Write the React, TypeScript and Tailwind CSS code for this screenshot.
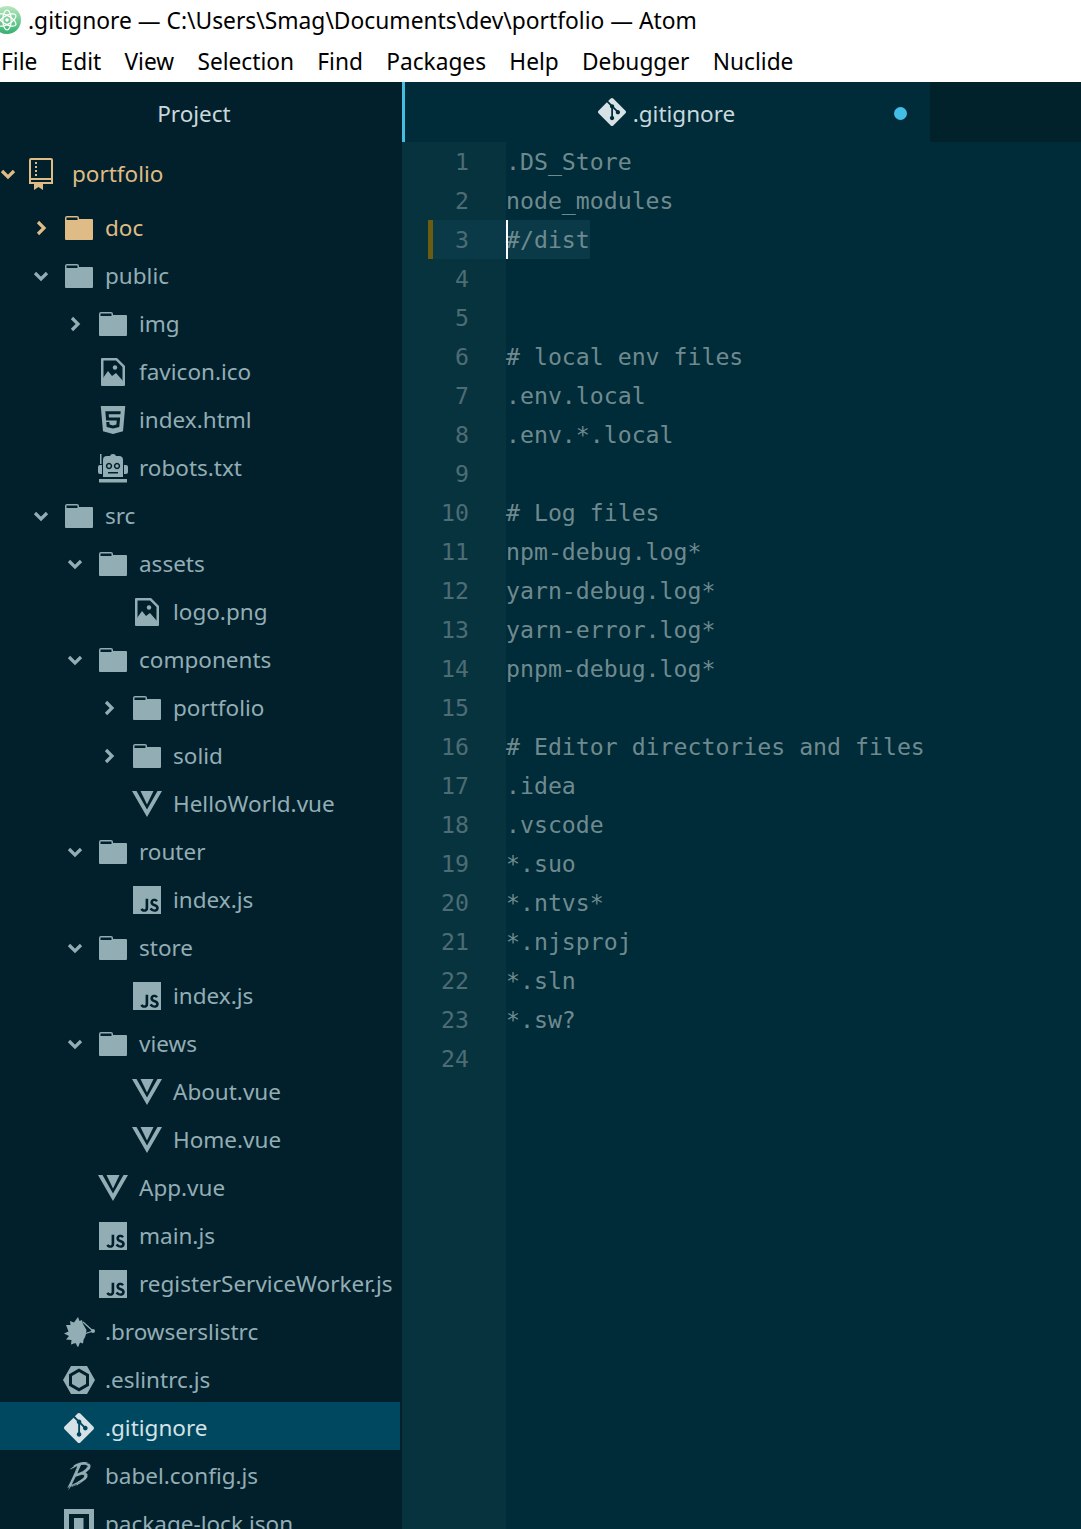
import { SiBabel, SiGit, SiHtml5, SiJavascript } from 'react-icons/si';

const uiFont = "font-['Noto_Sans',sans-serif]";

type Kind = 'folder' | 'image' | 'html' | 'robot' | 'vue' | 'js' | 'browsers' | 'eslint' | 'git' | 'babel' | 'npm';

type Row = {
  name: string;
  depth: 1 | 2 | 3;
  kind: Kind;
  open?: boolean;
  tan?: boolean;
  selected?: boolean;
};

const rows: Row[] = [
  { name: 'doc', depth: 1, kind: 'folder', open: false, tan: true },
  { name: 'public', depth: 1, kind: 'folder', open: true },
  { name: 'img', depth: 2, kind: 'folder', open: false },
  { name: 'favicon.ico', depth: 2, kind: 'image' },
  { name: 'index.html', depth: 2, kind: 'html' },
  { name: 'robots.txt', depth: 2, kind: 'robot' },
  { name: 'src', depth: 1, kind: 'folder', open: true },
  { name: 'assets', depth: 2, kind: 'folder', open: true },
  { name: 'logo.png', depth: 3, kind: 'image' },
  { name: 'components', depth: 2, kind: 'folder', open: true },
  { name: 'portfolio', depth: 3, kind: 'folder', open: false },
  { name: 'solid', depth: 3, kind: 'folder', open: false },
  { name: 'HelloWorld.vue', depth: 3, kind: 'vue' },
  { name: 'router', depth: 2, kind: 'folder', open: true },
  { name: 'index.js', depth: 3, kind: 'js' },
  { name: 'store', depth: 2, kind: 'folder', open: true },
  { name: 'index.js', depth: 3, kind: 'js' },
  { name: 'views', depth: 2, kind: 'folder', open: true },
  { name: 'About.vue', depth: 3, kind: 'vue' },
  { name: 'Home.vue', depth: 3, kind: 'vue' },
  { name: 'App.vue', depth: 2, kind: 'vue' },
  { name: 'main.js', depth: 2, kind: 'js' },
  { name: 'registerServiceWorker.js', depth: 2, kind: 'js' },
  { name: '.browserslistrc', depth: 1, kind: 'browsers' },
  { name: '.eslintrc.js', depth: 1, kind: 'eslint' },
  { name: '.gitignore', depth: 1, kind: 'git', selected: true },
  { name: 'babel.config.js', depth: 1, kind: 'babel' },
  { name: 'package-lock.json', depth: 1, kind: 'npm' },
];

const code = [
  '.DS_Store',
  'node_modules',
  '#/dist',
  '',
  '',
  '# local env files',
  '.env.local',
  '.env.*.local',
  '',
  '# Log files',
  'npm-debug.log*',
  'yarn-debug.log*',
  'yarn-error.log*',
  'pnpm-debug.log*',
  '',
  '# Editor directories and files',
  '.idea',
  '.vscode',
  '*.suo',
  '*.ntvs*',
  '*.njsproj',
  '*.sln',
  '*.sw?',
  '',
];

const depthPad = { 1: 'pl-[33px]', 2: 'pl-[67px]', 3: 'pl-[101px]' };

const Chevron = ({ open }: { open: boolean }) => (
  <svg viewBox="0 0 16 16" className="w-4 h-4 shrink-0" fill="none" stroke="currentColor" strokeWidth="3.2">
    {open ? <path d="M2 5l6 6 6-6" /> : <path d="M5 2l6 6-6 6" />}
  </svg>
);

const FolderIcon = () => (
  <svg viewBox="0 0 28 24" className="w-[28px] h-[24px] shrink-0" fill="currentColor">
    <path
      fillRule="evenodd"
      d="M0 2a2 2 0 0 1 2-2h10a2 2 0 0 1 2 2v1h13a1 1 0 0 1 1 1v19a1 1 0 0 1-1 1H1a1 1 0 0 1-1-1zM1.5 1.5v2.5h11v-2.5z"
    />
  </svg>
);

const ImageIcon = () => (
  <svg viewBox="0 0 24 28" className="w-[24px] h-[28px] shrink-0" fill="currentColor">
    <path
      fillRule="evenodd"
      d="M1 0h15l8 8v19a1 1 0 0 1-1 1H1a1 1 0 0 1-1-1V1a1 1 0 0 1 1-1zM2.500 2.500v23h19V9l-6.500-6.500z"
    />
    <circle cx="14" cy="9.500" r="2.200" />
    <path d="M2 26v-6l5-7 4 5 4-3 7 8v3z" />
  </svg>
);

const RobotIcon = () => (
  <svg viewBox="0 0 30 30" className="w-[30px] h-[30px] shrink-0" fill="currentColor">
    <rect x="2" y="1" width="1.500" height="10" />
    <path d="M12 4a3 3 0 0 1 6 0z" />
    <path
      fillRule="evenodd"
      d="M9 3h12a4 4 0 0 1 4 4v17H5V7a4 4 0 0 1 4-4zM11 9.800a3.200 3.200 0 1 0 .01 0zM19 9.800a3.200 3.200 0 1 0 .01 0zM10 19v1.500h10V19z"
    />
    <circle cx="11" cy="13" r="1.700" />
    <circle cx="19" cy="13" r="1.700" />
    <path d="M0 14a2 2 0 0 1 2-2h2v9H2a2 2 0 0 1-2-2zM30 14a2 2 0 0 0-2-2h-2v9h2a2 2 0 0 0 2-2z" />
    <rect x="1" y="26" width="28" height="3.500" />
  </svg>
);

const VueIcon = () => (
  <svg viewBox="0 0 30 26" className="w-[30px] h-[26px] shrink-0" fill="currentColor">
    <path d="M0 0h4.500L15 18.500 25.500 0H30L15 26z" />
    <path d="M8.500 0h13L15 13.500z" />
  </svg>
);

const HedgehogIcon = () => (
  <svg viewBox="0 0 31 30" className="w-[31px] h-[30px] shrink-0" fill="currentColor">
    <path d="M14 0l1.500 4 2.500-1 1 4 3.500 6-1 6-2 4-.5 3.500-3-1-2 5-2.500-4.500-4.500 1.500 .5-4.500-5.500-.5 3-3.500-5-2.500 4.500-2L2 8l4.500 0L6 4l4 1.500z" />
    <path d="M19 5l10 9-9 3" fill="none" stroke="currentColor" strokeWidth="1.300" />
    <circle cx="29" cy="14" r="2" />
  </svg>
);

const EslintIcon = () => (
  <svg viewBox="0 0 32 28" className="w-[32px] h-[28px] shrink-0" fill="currentColor">
    <path
      fillRule="evenodd"
      d="M0 14L8 0h16l8 14-8 14H8zM16 2.500L6 8.250v11.500l10 5.750 10-5.750V8.250z"
    />
    <path d="M16 6l7 4v8l-7 4-7-4v-8z" />
  </svg>
);

const NpmIcon = () => (
  <svg viewBox="0 0 30 30" className="w-[30px] h-[30px] shrink-0" fill="currentColor">
    <path fillRule="evenodd" d="M0 0h30v30H0zM5 5v25h5V9h9.500v21H25V5z" />
  </svg>
);

const TreeIcon = ({ kind }: { kind: Kind }) => {
  switch (kind) {
    case 'folder':
      return <FolderIcon />;
    case 'image':
      return <ImageIcon />;
    case 'html':
      return <SiHtml5 className="w-[28px] h-[28px] shrink-0" />;
    case 'robot':
      return <RobotIcon />;
    case 'vue':
      return <VueIcon />;
    case 'js':
      return <SiJavascript className="w-[28px] h-[28px] shrink-0" />;
    case 'browsers':
      return <HedgehogIcon />;
    case 'eslint':
      return <EslintIcon />;
    case 'git':
      return <SiGit className="w-[30px] h-[30px] shrink-0" />;
    case 'babel':
      return <SiBabel className="w-[28px] h-[30px] shrink-0" />;
    case 'npm':
      return <NpmIcon />;
  }
};

const TreeRow = ({ row }: { row: Row }) => {
  const tone = row.selected ? 'text-[#d6e2e5] bg-[#004860]' : row.tan ? 'text-[#dfbb85]' : 'text-[#93adb4]';
  return (
    <div className={`flex items-center h-[48px] w-[400px] pt-[4px] ${depthPad[row.depth]} ${tone}`}>
      <div className="w-[16px] flex justify-center shrink-0">{row.open !== undefined && <Chevron open={row.open} />}</div>
      <div className="w-[28px] ml-[16px] mr-[12px] flex justify-center shrink-0">
        <TreeIcon kind={row.kind} />
      </div>
      <span className="text-[22.5px] whitespace-nowrap leading-none">{row.name}</span>
    </div>
  );
};

const AtomLogo = () => (
  <svg viewBox="0 0 28 28" className="w-[28px] h-[28px] -ml-[7px] mb-[2px] shrink-0">
    <defs>
      <linearGradient id="atom" x1="0" y1="0" x2="0" y2="1">
        <stop offset="0" stopColor="#b8e8be" />
        <stop offset="1" stopColor="#35b070" />
      </linearGradient>
    </defs>
    <circle cx="14" cy="14" r="14" fill="url(#atom)" />
    <g fill="none" stroke="#fff" strokeWidth="1.200">
      <ellipse cx="14" cy="14" rx="10" ry="4.200" transform="rotate(30 14 14)" />
      <ellipse cx="14" cy="14" rx="10" ry="4.200" transform="rotate(90 14 14)" />
      <ellipse cx="14" cy="14" rx="10" ry="4.200" transform="rotate(150 14 14)" />
    </g>
    <circle cx="14" cy="14" r="1.800" fill="#fff" />
  </svg>
);

const menu = ['File', 'Edit', 'View', 'Selection', 'Find', 'Packages', 'Help', 'Debugger', 'Nuclide'];

export default function App() {
  return (
    <div className={`w-[1081px] h-[1529px] overflow-hidden flex flex-col bg-white ${uiFont}`}>
      {/* Window chrome */}
      <div className="h-[41px] flex items-center pt-[1px] text-black text-[22.8px] whitespace-nowrap overflow-hidden">
        <AtomLogo />
        <span className="ml-[7px]">.gitignore — C:\Users\Smag\Documents\dev\portfolio — Atom</span>
      </div>
      <div className="h-[41px] flex items-center gap-[23.3px] pl-[1px] pt-[1px] text-black text-[22.7px]">
        {menu.map((item) => (
          <span key={item}>{item}</span>
        ))}
      </div>

      <div className="flex-1 flex min-h-0">
        {/* Tree view */}
        <aside className="w-[402px] bg-[#01202b] overflow-hidden shrink-0">
          <div className="h-[64px] flex items-center justify-center pr-[14px] text-[#c9d8dc] text-[22.5px]">Project</div>
          <div className="h-[56px] flex items-center text-[#dfbb85]">
            <Chevron open />
            <svg viewBox="0 0 24 32" className="w-[24px] h-[32px] ml-[13px] shrink-0" fill="currentColor">
              <path
                fillRule="evenodd"
                d="M2 0h20a2 2 0 0 1 2 2v24H0V2a2 2 0 0 1 2-2zM2 2v18h20V2zM2 22v2h20v-2zM6 4h2v2H6zM6 8h2v2H6zM6 12h2v2H6zM6 16h2v2H6z"
              />
              <path d="M5 24h9v8l-4.500-3L5 32z" />
            </svg>
            <span className="ml-[19px] text-[22.5px] leading-none">portfolio</span>
          </div>
          {rows.map((row, i) => (
            <TreeRow key={i} row={row} />
          ))}
        </aside>

        {/* Editor */}
        <main className="flex-1 min-w-0 flex flex-col bg-[#002b38]">
          <div className="h-[60px] flex bg-[#01212b]">
            <div className="w-[528px] relative flex items-center justify-center gap-[7px] bg-[#002b38] border-l-[3px] border-[#43bfe6] text-[#c9d8dc] text-[22.5px] pr-[2px] pt-[3px]">
              <SiGit className="w-[28px] h-[28px] text-[#d6e2e5] -mt-[3px]" />
              <span>.gitignore</span>
              <span className="absolute left-[489px] top-[25px] w-[13px] h-[13px] rounded-full bg-[#43bfe6]" />
            </div>
          </div>
          <div className="flex-1 flex font-['DejaVu_Sans_Mono',monospace] text-[23.2px] leading-[40px]">
            <div className="w-[104px] bg-[#07333f] text-[#4d6c74] shrink-0">
              {code.map((_, i) =>
                i === 2 ? (
                  <div key={i} className="ml-[26px] h-[39px] pr-[37px] text-right border-l-[5px] border-[#6b5c12] bg-[#0a3a48]">
                    {i + 1}
                  </div>
                ) : (
                  <div key={i} className="h-[39px] pr-[37px] text-right">
                    {i + 1}
                  </div>
                ),
              )}
            </div>
            <div className="flex-1 text-[#6f8a8f] whitespace-pre">
              {code.map((line, i) =>
                i === 2 ? (
                  <div key={i} className="h-[39px] relative w-fit bg-[#0a3a48]">
                    {line}
                    <span className="absolute left-0 top-0 w-[2px] h-[39px] bg-white" />
                  </div>
                ) : (
                  <div key={i} className="h-[39px]">
                    {line}
                  </div>
                ),
              )}
            </div>
          </div>
        </main>
      </div>
    </div>
  );
}
